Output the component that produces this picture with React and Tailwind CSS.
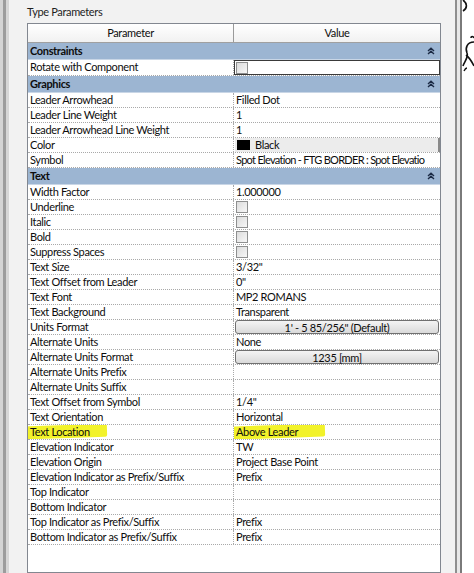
import React from 'react';

const rows = [
  { group: 'Constraints' },
  { p: 'Rotate with Component', type: 'editcheck' },
  { group: 'Graphics' },
  { p: 'Leader Arrowhead', v: 'Filled Dot' },
  { p: 'Leader Line Weight', v: '1' },
  { p: 'Leader Arrowhead Line Weight', v: '1' },
  { p: 'Color', type: 'color', v: 'Black' },
  { p: 'Symbol', v: 'Spot Elevation - FTG BORDER : Spot Elevatio', tight: true },
  { group: 'Text' },
  { p: 'Width Factor', v: '1.000000' },
  { p: 'Underline', type: 'check' },
  { p: 'Italic', type: 'check' },
  { p: 'Bold', type: 'check' },
  { p: 'Suppress Spaces', type: 'check' },
  { p: 'Text Size', v: '3/32"' },
  { p: 'Text Offset from Leader', v: '0"' },
  { p: 'Text Font', v: 'MP2 ROMANS' },
  { p: 'Text Background', v: 'Transparent' },
  { p: 'Units Format', type: 'button', v: '1\' - 5 85/256" (Default)' },
  { p: 'Alternate Units', v: 'None' },
  { p: 'Alternate Units Format', type: 'button', v: '1235 [mm]' },
  { p: 'Alternate Units Prefix', v: '' },
  { p: 'Alternate Units Suffix', v: '' },
  { p: 'Text Offset from Symbol', v: '1/4"' },
  { p: 'Text Orientation', v: 'Horizontal' },
  { p: 'Text Location', v: 'Above Leader', hl: true },
  { p: 'Elevation Indicator', v: 'TW' },
  { p: 'Elevation Origin', v: 'Project Base Point' },
  { p: 'Elevation Indicator as Prefix/Suffix', v: 'Prefix' },
  { p: 'Top Indicator', v: '' },
  { p: 'Bottom Indicator', v: '' },
  { p: 'Top Indicator as Prefix/Suffix', v: 'Prefix' },
  { p: 'Bottom Indicator as Prefix/Suffix', v: 'Prefix' },
];

function Chevrons() {
  return (
    <svg width="8" height="8" viewBox="0 0 8 8" className="shrink-0">
      <path d="M1 4 L4 1.2 L7 4 M1 7 L4 4.2 L7 7" fill="none" stroke="#1b2a44" strokeWidth="1.4" />
    </svg>
  );
}

function CheckBox() {
  return (
    <div className="w-[12px] h-[12px] border border-[#8e8f8f] bg-gradient-to-br from-[#dcdcdc] to-[#f7f7f7]" />
  );
}

function Highlight({ children, extra }) {
  return (
    <span className="relative inline-block">
      <span className={`absolute left-[-3px] top-[1px] h-[13px] bg-[#f2f22a] rounded-[2px] -rotate-2 ${extra}`} />
      <span className="relative">{children}</span>
    </span>
  );
}

function ValueCell({ row }) {
  if (row.type === 'editcheck') {
    return (
      <div className="flex-1 h-full flex items-center border border-[#3a3a3a] bg-white pl-[1px]">
        <CheckBox />
      </div>
    );
  }
  if (row.type === 'check') {
    return (
      <div className="flex-1 h-full flex items-center pl-[2px]">
        <CheckBox />
      </div>
    );
  }
  if (row.type === 'color') {
    return (
      <div className="flex-1 h-full flex items-center gap-[5px] pl-[2px] bg-[#ececec] border-l border-l-[#ffffff] border-r-2 border-r-[#8a8a8a]">
        <div className="w-[13px] h-[10px] bg-black" />
        <span>{row.v}</span>
      </div>
    );
  }
  if (row.type === 'button') {
    return (
      <div className="flex-1 h-full flex items-center px-[1px]">
        <div className="w-full h-[14px] rounded-[3px] border border-[#707070] bg-gradient-to-b from-[#f4f4f4] to-[#dadada] flex items-center justify-center leading-none">
          {row.v}
        </div>
      </div>
    );
  }
  return (
    <div className={`flex-1 h-full flex items-center pl-[2px] overflow-hidden whitespace-nowrap ${row.tight ? 'tracking-[-0.7px]' : ''}`}>
      {row.hl ? <Highlight extra="w-[92px]">{row.v}</Highlight> : row.v}
    </div>
  );
}

export default function App() {
  return (
    <div
      className="w-[474px] h-[573px] overflow-hidden flex bg-white text-[#0d0d0d] tracking-[-0.35px]"
      style={{ fontFamily: 'Lato, "Open Sans", sans-serif', fontSize: '11px' }}
    >
      {/* left window frame */}
      <div className="w-[3px] bg-[#d4d4d4]" />
      <div className="w-[3px] bg-[#9c9c9c]" />
      <div className="w-[3px] bg-[#d6d6d6]" />

      {/* panel */}
      <div className="w-[446px] bg-[#f2f2f2] flex flex-col pl-[18px] pr-[14px]">
        <div className="h-[23px] flex items-center pt-[1px] text-[#1e1e1e]">Type Parameters</div>

        <div className="flex-1 flex flex-col border border-[#828790] bg-white">
          {/* header */}
          <div className="h-[19px] flex shrink-0 border-b border-[#a0a0a0] bg-gradient-to-b from-[#ffffff] to-[#f1f1f1]">
            <div className="w-[206px] h-full flex items-center justify-center border-r border-[#9a9a9a]">Parameter</div>
            <div className="flex-1 h-full flex items-center justify-center">Value</div>
          </div>

          {rows.map((row, i) =>
            row.group ? (
              <div
                key={i}
                className="h-[17px] shrink-0 flex items-center justify-between bg-[#9cb5d2] pl-[2px] pr-[5px] font-bold border-b border-[#c9d6e6]"
              >
                <span>{row.group}</span>
                <Chevrons />
              </div>
            ) : (
              <div
                key={i}
                className={`${row.type === 'editcheck' ? 'h-[16px]' : 'h-[15px]'} shrink-0 flex border-b border-dotted border-[#a9a9a9]`}
              >
                <div className="w-[206px] h-full flex items-center pl-[2px] border-r border-dotted border-[#a9a9a9] whitespace-nowrap overflow-hidden">
                  {row.hl ? <Highlight extra="w-[80px]">{row.p}</Highlight> : row.p}
                </div>
                <ValueCell row={row} />
              </div>
            )
          )}
          <div className="flex-1" />
        </div>
      </div>

      {/* right window frame */}
      <div className="w-[2px] bg-[#8f8f8f]" />
      <div className="w-[3px] bg-[#e8e8e8]" />
      <div className="w-[2px] bg-[#7a7a7a]" />

      {/* sketch beyond */}
      <div className="flex-1 bg-white">
        <svg width="12" height="120" viewBox="0 0 12 120">
          <path d="M1 0 C5 3 6 8 1 11" fill="none" stroke="#111" strokeWidth="1.6" />
          <path d="M9 38 C9 36 11 36 12 38" fill="none" stroke="#111" strokeWidth="1.6" />
          <path d="M12 42 C5 42 3 48 5 53 C7 57 2 62 1 66" fill="none" stroke="#111" strokeWidth="1.6" />
          <path d="M4 55 C8 58 10 62 12 66" fill="none" stroke="#111" strokeWidth="1.6" />
          <path d="M2 71 C3 69 4 68 5 68" fill="none" stroke="#111" strokeWidth="1.4" />
        </svg>
      </div>
    </div>
  );
}
